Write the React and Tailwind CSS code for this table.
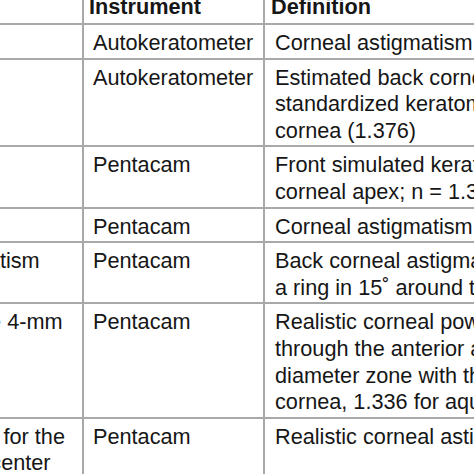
import React from "react";

const rows = [
  {
    param: ["Auto-K astigmatism"],
    instrument: "Autokeratometer",
    definition: ["Corneal astigmatism measured by the autokeratometer"],
  },
  {
    param: ["Auto-K BCA", "", ""],
    instrument: "Autokeratometer",
    definition: [
      "Estimated back corneal astigmatism using the",
      "standardized keratometric index for the",
      "cornea (1.376)",
    ],
  },
  {
    param: ["Sim-K", ""],
    instrument: "Pentacam",
    definition: [
      "Front simulated keratometry in a 3-mm zone around the",
      "corneal apex; n = 1.3375",
    ],
  },
  {
    param: ["Sim-K astigmatism"],
    instrument: "Pentacam",
    definition: ["Corneal astigmatism from the simulated keratometry"],
  },
  {
    param: ["Posterior corneal astigmatism", ""],
    instrument: "Pentacam",
    definition: [
      "Back corneal astigmatism measured in",
      "a ring in 15˚ around the corneal apex",
    ],
  },
  {
    param: ["Total corneal power in the 4-mm", "zone", "", ""],
    instrument: "Pentacam",
    definition: [
      "Realistic corneal power, calculated by ray tracing",
      "through the anterior and posterior surfaces in a 4-mm",
      "diameter zone with the refractive index of the",
      "cornea, 1.336 for aqueous humor",
    ],
  },
  {
    param: ["Real corneal astigmatism for the", "area around the corneal center"],
    instrument: "Pentacam",
    definition: ["Realistic corneal astigmatism"],
  },
];

const Lines = ({ lines }) =>
  lines.map((line, i) => (
    <div key={i} className="whitespace-nowrap h-[26.6px]">
      {line}
    </div>
  ));

export default function App() {
  return (
    <div
      className="w-[474px] h-[474px] overflow-hidden bg-white text-[#161616]"
      style={{ fontFamily: '"Liberation Sans", Arial, sans-serif' }}
    >
      <div className="-ml-[257px] -mt-[8px] w-max grid grid-cols-[339px_181px_640px] text-[21.7px] leading-[26.6px]">
        {/* header */}
        <div className="pl-[11px] pt-[2px] pb-[2.4px] font-bold">Parameter</div>
        <div className="pl-[5px] pt-[2px] pb-[2.4px] font-bold border-l-2 border-[#a9a9a9]">
          Instrument
        </div>
        <div className="pl-[6px] pt-[2px] pb-[2.4px] font-bold border-l-2 border-[#a9a9a9]">
          Definition
        </div>

        {rows.map((row, i) => (
          <React.Fragment key={i}>
            <div className="pl-[11px] pt-[5px] pb-[1px] border-t-2 border-[#a9a9a9]">
              <Lines lines={row.param} />
            </div>
            <div className="pl-[9px] pt-[5px] pb-[1px] border-t-2 border-l-2 border-[#a9a9a9]">
              <div className="whitespace-nowrap">{row.instrument}</div>
            </div>
            <div className="pl-[10px] pt-[5px] pb-[1px] border-t-2 border-l-2 border-[#a9a9a9]">
              <Lines lines={row.definition} />
            </div>
          </React.Fragment>
        ))}
      </div>
    </div>
  );
}
